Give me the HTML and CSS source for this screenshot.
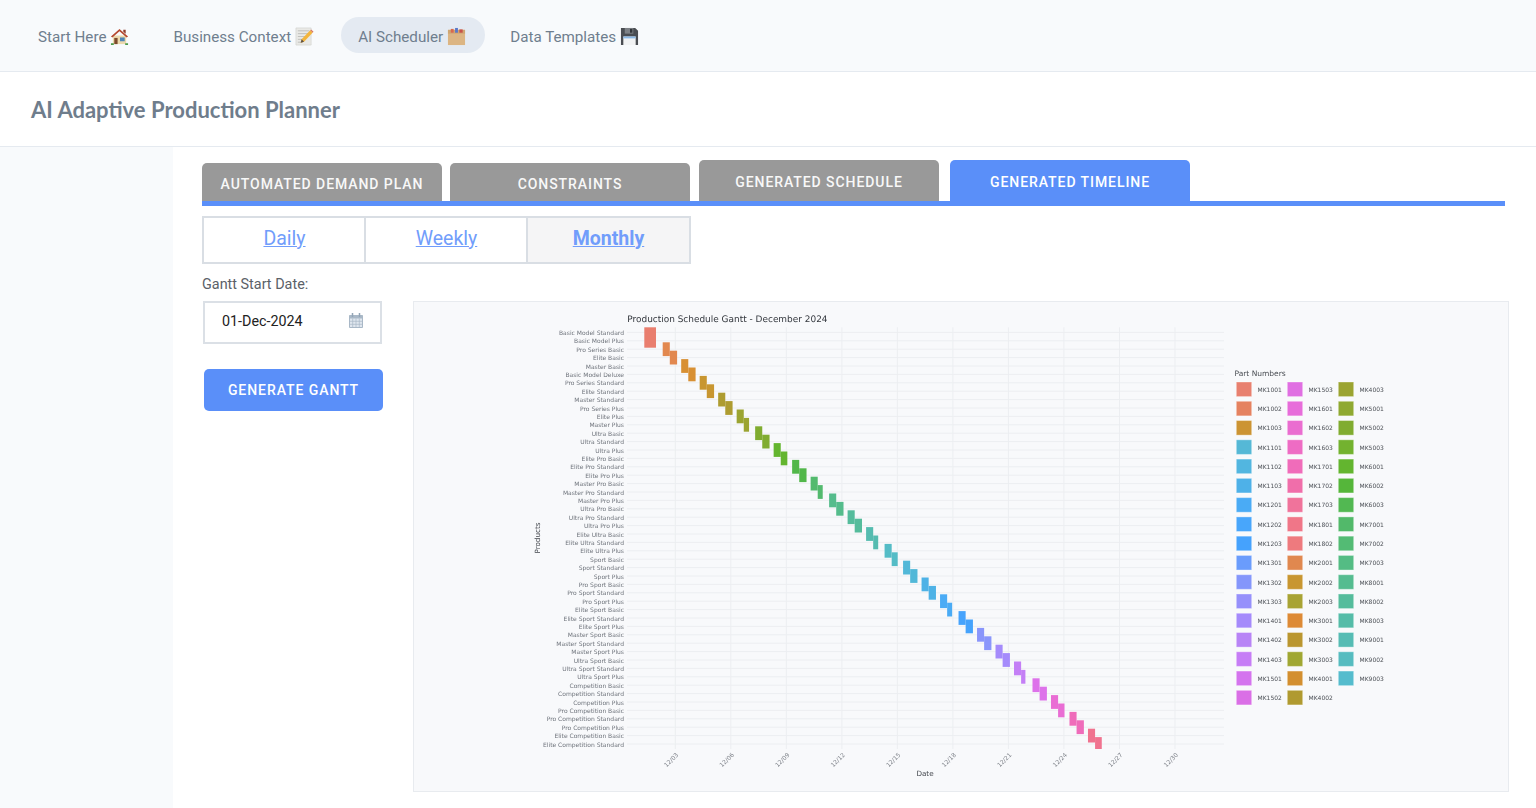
FILE: index.html
```html
<!DOCTYPE html>
<html lang="en">
<head>
    <meta charset="UTF-8">
    <title>AI Adaptive Production Planner</title>
    <link rel="stylesheet" href="styles.css">
</head>
<body>

<nav class="nav">
    <a class="nav-item">Start Here
        <svg class="emoji" viewBox="0 0 20 20">
            <path d="M3 9h14v9H3z" fill="#ecd9ae"/>
            <path d="M1 10 10 2l9 8-1.500 1L10 4.500 2.500 11z" fill="#b5482f"/>
            <path d="M14 3h2.500v4L14 5z" fill="#8d3a2a"/>
            <path d="M4.500 11.500h3.500v6.500H4.500z" fill="#7d4a2c"/>
            <path d="M10.500 11h5v4h-5z" fill="#4f86b8"/>
            <path d="M1 17h3v2H1zM16 17h3v2h-3z" fill="#4c9a4a"/>
        </svg>
    </a>
    <a class="nav-item">Business Context
        <svg class="emoji" viewBox="0 0 20 20">
            <path d="M1 1h16v18H1z" fill="#e9e9e6" stroke="#cfcfca" stroke-width=".6"/>
            <path d="M3 4h12M3 7h12M3 10h9M3 13h6M3 16h5" stroke="#b4b4b0" stroke-width=".8"/>
            <path d="M6 16.500 7 13 16 3.500l2.500 2.500L9.500 15.500z" fill="#f3b53c"/>
            <path d="M16 3.500l1-1 2.500 2.500-1 1z" fill="#d9775f"/>
            <path d="M6 16.500 7 13l2.500 2.500z" fill="#5b5147"/>
        </svg>
    </a>
    <a class="nav-item active">AI Scheduler
        <svg class="emoji" viewBox="0 0 20 20">
            <path d="M1 3h18v16H1z" fill="#dcb583"/>
            <path d="M1 3h18v4H1z" fill="#cfa673"/>
            <path d="M4 2h3v4H4z" fill="#d9694f"/>
            <path d="M8.500 1h3v5h-3z" fill="#5a78c8"/>
            <path d="M13 2.500h3.500V6H13z" fill="#c8524a"/>
        </svg>
    </a>
    <a class="nav-item">Data Templates
        <svg class="emoji" viewBox="0 0 20 20">
            <path d="M1 1h15l3 3v15H1z" fill="#4a4d52"/>
            <path d="M5 1h9v6H5z" fill="#7d8186"/>
            <path d="M10.500 2h2.500v4h-2.500z" fill="#33363a"/>
            <path d="M3.500 10h13v9h-13z" fill="#f2f3f4"/>
            <path d="M3.500 10h13v2h-13z" fill="#8ab8e6"/>
        </svg>
    </a>
</nav>

<header class="title-bar">
    <h1>AI Adaptive Production Planner</h1>
</header>

<div class="page">
    <aside class="sidebar"></aside>

    <main class="main">
        <div class="tabs">
            <a class="tab low">AUTOMATED DEMAND PLAN</a>
            <a class="tab low">CONSTRAINTS</a>
            <a class="tab">GENERATED SCHEDULE</a>
            <a class="tab selected">GENERATED TIMELINE</a>
        </div>

        <div class="periods">
            <a class="period">Daily</a>
            <a class="period">Weekly</a>
            <a class="period current">Monthly</a>
        </div>

        <label class="field-label">Gantt Start Date:</label>

        <div class="gantt-row">
            <div class="controls">
                <div class="date-input">
                    <span>01-Dec-2024</span>
                    <svg class="calendar" viewBox="0 0 14 15">
                        <path d="M.5 2.500h13v12H.5z" fill="#dfe6ee" stroke="#a9b8c7"/>
                        <path d="M.5 2.500h13v3H.5z" fill="#a9b8c7"/>
                        <path d="M3.500 0v4M10.500 0v4" stroke="#93a5b6" stroke-width="1.500"/>
                        <path d="M.5 8.300h13M.5 11.300h13M3.700 5.500v9M7 5.500v9M10.300 5.500v9" stroke="#a9b8c7" stroke-width=".7"/>
                    </svg>
                </div>
                <button class="generate">GENERATE GANTT</button>
            </div>

            <div class="chart-frame">
                <svg id="gantt" class="gantt" viewBox="414 302 1094 489"></svg>
            </div>
        </div>
    </main>
</div>

<script src="chart.js"></script>
</body>
</html>
```

FILE: styles.css
```css
* { margin: 0; padding: 0; box-sizing: border-box; }
html, body { height: 100%; overflow: hidden; }
body { background: #fff; font-family: Roboto, "Liberation Sans", sans-serif; color: #555; }


/**** nav ****/
.nav { display: flex; align-items: flex-start; gap: 10px; height: 72px; padding: 17px 0 0 21px; background: #f8fafc; border-bottom: 1px solid #e5eaf0; }
.nav-item { display: flex; align-items: center; gap: 4px; height: 36px; padding: 3px 17px 0; border-radius: 18px; font-size: 15.200px; color: #6f7e8e; }
.nav-item.active { margin-right: -2px; padding-right: 19px; background: #e4eaf2; }
.emoji { width: 19px; height: 19px; }

.title-bar { display: flex; align-items: center; height: 75px; padding-left: 31px; border-bottom: 1px solid #e5eaf0; }
.title-bar h1 { font-family: Lato, sans-serif; font-size: 22px; font-weight: 700; color: #6f7d8c; }


/**** page ****/
.page { display: flex; height: 661px; }
.sidebar { width: 173px; flex-shrink: 0; background: #f8fafc; }
.main { flex: 1; padding: 13px 31px 0 29px; background: #fff; }


/**** tabs ****/
.tabs { display: flex; align-items: flex-end; width: 1303px; height: 46px; border-bottom: 5px solid #5a8ff9; }
.tab { display: flex; align-items: center; justify-content: center; width: 240px; height: 41px; margin-right: 9px; padding-top: 2px; border-radius: 5px 5px 0 0; background: #999; font-size: 14px; font-weight: 500; letter-spacing: .930px; color: #f8f8f8; }
.tab.low { height: 38px; margin-right: 8px; padding-top: 4px; }
.tab.low + .tab.low { margin-right: 9px; }
.tab:nth-child(3) { margin-right: 11px; }
.tab.selected { background: #5a8ff9; color: #fff; }

.periods { display: flex; width: 489px; height: 48px; margin-top: 10px; border: 2px solid #d9dee4; }
.period { flex: 1; display: flex; align-items: center; justify-content: center; padding-bottom: 4px; font-size: 19.500px; color: #719dfb; text-decoration: underline; }
.period + .period { margin-left: -1px; border-left: 2px solid #d9dee4; }
.period.current { background: #f5f5f6; font-weight: 700; }

.field-label { display: block; margin-top: 12px; font-size: 14.400px; line-height: 18px; color: #5b6168; }


/**** gantt ****/
.gantt-row { display: flex; margin-top: 7px; }
.controls { width: 211px; flex-shrink: 0; padding: 0 0 0 1px; }
.date-input { display: flex; align-items: center; justify-content: space-between; width: 179px; height: 43px; padding: 0 17px 4px 17px; border: 2px solid #dbe0e6; font-size: 14.300px; color: #222; }
.calendar { width: 14px; height: 15px; }
.generate { display: block; width: 179px; height: 42px; margin: 25px 0 0 1px; border: 0; border-radius: 5px; background: #5a8ff9; font-family: inherit; font-size: 14px; font-weight: 500; letter-spacing: .930px; color: #fff; }

.chart-frame { width: 1096px; height: 491px; flex-shrink: 0; background: #f8f9fb; border: 1px solid #e8ebef; }
.gantt { display: block; width: 1094px; height: 489px; font-family: "DejaVu Sans", sans-serif; text-rendering: geometricPrecision; filter: blur(.3px); }
.gantt .grid { stroke: #eceef1; stroke-width: 1; }
.gantt .row-label { font-size: 6px; fill: #6f747c; text-anchor: end; }
.gantt .tick-label { font-size: 6px; fill: #7f838a; text-anchor: middle; }
.gantt .heading { font-size: 8.950px; fill: #34383e; }
.gantt .axis-title { font-size: 7.200px; fill: #44484e; text-anchor: middle; }
.gantt .legend-title { font-size: 7.500px; fill: #4a4e54; }
.gantt .legend-label { font-size: 6px; fill: #4c5056; }
.gantt .swatch { stroke: #fff; stroke-opacity: .35; stroke-width: 1; }
```

FILE: chart.js
```js
var rows = ['Basic Model Standard', 'Basic Model Plus', 'Pro Series Basic', 'Elite Basic', 'Master Basic',
    'Basic Model Deluxe', 'Pro Series Standard', 'Elite Standard', 'Master Standard', 'Pro Series Plus',
    'Elite Plus', 'Master Plus', 'Ultra Basic', 'Ultra Standard', 'Ultra Plus',
    'Elite Pro Basic', 'Elite Pro Standard', 'Elite Pro Plus', 'Master Pro Basic', 'Master Pro Standard',
    'Master Pro Plus', 'Ultra Pro Basic', 'Ultra Pro Standard', 'Ultra Pro Plus', 'Elite Ultra Basic',
    'Elite Ultra Standard', 'Elite Ultra Plus', 'Sport Basic', 'Sport Standard', 'Sport Plus',
    'Pro Sport Basic', 'Pro Sport Standard', 'Pro Sport Plus', 'Elite Sport Basic', 'Elite Sport Standard',
    'Elite Sport Plus', 'Master Sport Basic', 'Master Sport Standard', 'Master Sport Plus', 'Ultra Sport Basic',
    'Ultra Sport Standard', 'Ultra Sport Plus', 'Competition Basic', 'Competition Standard', 'Competition Plus',
    'Pro Competition Basic', 'Pro Competition Standard', 'Pro Competition Plus', 'Elite Competition Basic', 'Elite Competition Standard'];

// one colour for each pair of rows
var barColors = ['#e97e6e', '#e2884f', '#d89033', '#c89630', '#ae9c30', '#9ba431', '#80ac30', '#63b52f', '#52b74a',
    '#53ba6e', '#55bc8c', '#55bc9c', '#55bcb0', '#54bcc6', '#52b8d8', '#4eb2e6', '#4aabf5', '#46a3fc', '#8a96fb',
    '#a58bfb', '#c47ff6', '#dd72ea', '#e96dd4', '#ef6cba', '#f0738f'];

// second bar of a pair is shorter on some days
var shortBars = { 5: 5.3, 7: 6.6, 9: 5, 12: 5, 13: 6, 16: 5, 20: 4.3, 22: 6.4, 24: 6.7 };

var legend = [
    ['MK1001', '#e8806f'], ['MK1002', '#e58260'], ['MK1003', '#cc9433'], ['MK1101', '#55b8d6'], ['MK1102', '#52b6e0'],
    ['MK1103', '#4eb1e8'], ['MK1201', '#4aabf5'], ['MK1202', '#48a6fb'], ['MK1203', '#45a2fd'], ['MK1301', '#6a9cfc'],
    ['MK1302', '#8496fb'], ['MK1303', '#9690fb'], ['MK1401', '#a58afb'], ['MK1402', '#b884f6'], ['MK1403', '#c67df6'],
    ['MK1501', '#d474ee'], ['MK1502', '#da6fe6'],
    ['MK1503', '#e06fe2'], ['MK1601', '#e76dda'], ['MK1602', '#ea6dd0'], ['MK1603', '#ee6cc4'], ['MK1701', '#f06cba'],
    ['MK1702', '#f06eaa'], ['MK1703', '#f0739b'], ['MK1801', '#f07688'], ['MK1802', '#ee7a7e'], ['MK2001', '#e0884f'],
    ['MK2002', '#c89630'], ['MK2003', '#a8a334'], ['MK3001', '#dd8a36'], ['MK3002', '#ba9630'], ['MK3003', '#a0a733'],
    ['MK4001', '#d38f30'], ['MK4002', '#b09a30'],
    ['MK4003', '#9ba431'], ['MK5001', '#8fa931'], ['MK5002', '#80ac30'], ['MK5003', '#73b22f'], ['MK6001', '#63b52f'],
    ['MK6002', '#55b63a'], ['MK6003', '#52b852'], ['MK7001', '#52b96a'], ['MK7002', '#53bb74'], ['MK7003', '#54bc84'],
    ['MK8001', '#55bc90'], ['MK8002', '#55bc9c'], ['MK8003', '#55bca8'], ['MK9001', '#56bcb4'], ['MK9002', '#56bcc0'],
    ['MK9003', '#55bccd']];

var svg = document.getElementById('gantt');
var rowY = function (i) { return 332.4 + 8.4 * i; };
var top_ = 327.3, bottom = 749;

function add(name, attrs, text) {
    var el = document.createElementNS('http://www.w3.org/2000/svg', name);
    for (var k in attrs) el.setAttribute(k, attrs[k]);
    if (text) el.textContent = text;
    svg.appendChild(el);
    return el;
}

function label(cls, x, y, text, extra) {
    var attrs = { 'class': cls, x: x, y: y };
    for (var k in extra) attrs[k] = extra[k];
    return add('text', attrs, text);
}

function bar(x1, x2, y1, y2, color) {
    y1 = Math.max(y1, top_);
    y2 = Math.min(y2, bottom);
    add('rect', { x: x1, y: y1, width: x2 - x1, height: y2 - y1, fill: color });
}

label('heading', 627.3, 322, 'Production Schedule Gantt - December 2024');

// rows
rows.forEach(function (name, i) {
    add('line', { 'class': 'grid', x1: 627, x2: 1224, y1: rowY(i), y2: rowY(i) });
    label('row-label', 624, rowY(i) + 2.6, name);
});

// days
var days = ['12/03', '12/06', '12/09', '12/12', '12/15', '12/18', '12/21', '12/24', '12/27', '12/30'];
days.forEach(function (day, i) {
    var x = 675.3 + 55.52 * i;
    add('line', { 'class': 'grid', x1: x, x2: x, y1: top_, y2: bottom });
    label('tick-label', x - 4, 762, day, { transform: 'rotate(-45 ' + (x - 4) + ' 760)' });
});

// bars
bar(644.3, 656, rowY(0) - 6.9, rowY(1) + 6.9, barColors[0]);
for (var p = 1; p < 25; p++) {
    var start = 662.7 + 18.49 * (p - 1);
    var mid = start + 7.1;
    var end = mid + (shortBars[p] || 7.3);
    bar(start, mid, rowY(2 * p) - 6.9, rowY(2 * p) + 6.9, barColors[p]);
    bar(mid, end, rowY(2 * p + 1) - 6.9, rowY(2 * p + 1) + 6.9, barColors[p]);
}

label('axis-title', 925, 775.5, 'Date');
label('axis-title', 540, 538, 'Products', { transform: 'rotate(-90 540 538)' });

// legend, 17 per column
label('legend-title', 1234.5, 375.5, 'Part Numbers');
legend.forEach(function (item, i) {
    var col = Math.floor(i / 17);
    var y = 389.3 + 19.27 * (i % 17);
    add('rect', { 'class': 'swatch', x: 1236.3 + 51 * col, y: y - 7.3, width: 15.4, height: 14.6, fill: item[1] });
    label('legend-label', 1257.5 + 51 * col, y + 2.5, item[0]);
});
```
